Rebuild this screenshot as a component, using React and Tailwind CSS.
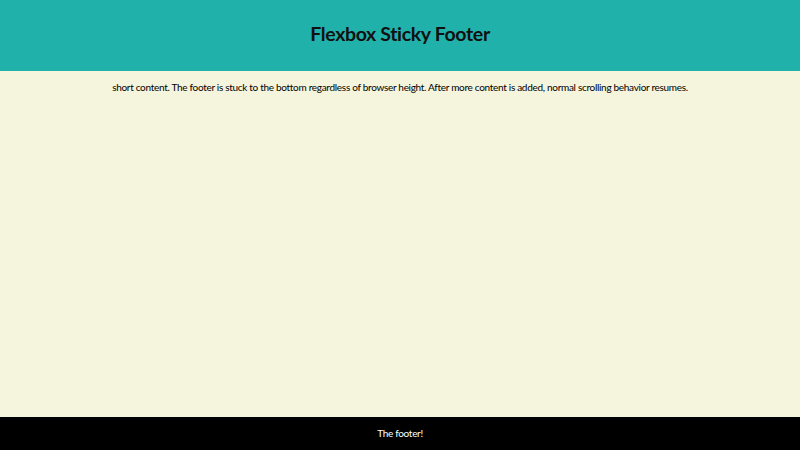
export default function App() {
  return (
    <div
      className="flex min-h-screen flex-col bg-[#f5f4dc] text-black"
      style={{ fontFamily: 'Lato, "Liberation Sans", sans-serif' }}
    >
      <header className="flex h-[71px] items-center justify-center bg-[#20b2aa] pb-[4px]">
        <h1 className="text-[19.5px] font-bold tracking-[-0.35px] text-[#111]">Flexbox Sticky Footer</h1>
      </header>
      <main className="flex-1 pt-[9px] text-center">
        <p className="text-[10px] leading-[14px] tracking-[-0.3px]">
          short content. The footer is stuck to the bottom regardless of browser height. After more content is added, normal scrolling behavior resumes.
        </p>
      </main>
      <footer className="flex h-[33px] items-center justify-center bg-black">
        <p className="text-[10px] tracking-[-0.3px] text-white">The footer!</p>
      </footer>
    </div>
  );
}
